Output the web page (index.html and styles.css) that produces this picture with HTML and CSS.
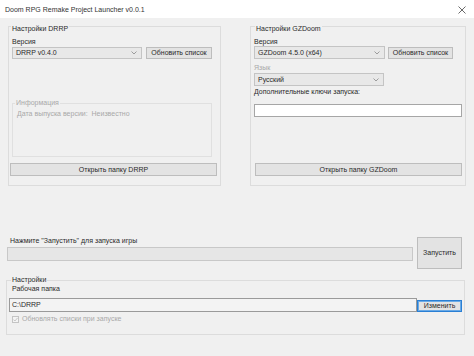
FILE: index.html
```html
<!DOCTYPE html>
<html lang="ru">
<head>
    <meta charset="UTF-8">
    <meta name="viewport" content="width=device-width, initial-scale=1.0">
    <title>Doom RPG Remake Project Launcher v0.0.1</title>
    <link rel="stylesheet" href="styles.css">
</head>
<body>
    <div class="window">
        <div class="titlebar">
            <span class="title">Doom RPG Remake Project Launcher v0.0.1</span>
            <svg class="close" width="8" height="8" viewBox="0 0 8 8">
                <path d="M0.5 0.5 L7.5 7.5 M7.5 0.5 L0.5 7.5" stroke="#444" stroke-width="0.8" fill="none"/>
            </svg>
        </div>
        <div class="client">
            <div class="top-row">
                <div class="group group-drrp">
                    <div class="legend">Настройки DRRP</div>
                    <div class="label lbl-version">Версия</div>
                    <div class="row">
                        <div class="combo combo-drrp">DRRP v0.4.0<svg class="arrow" width="6" height="4" viewBox="0 0 6 4"><path d="M0.5 0.5 L3 3 L5.5 0.5" stroke="#888" stroke-width="0.8" fill="none"/></svg></div>
                        <div class="btn btn-refresh">Обновить список</div>
                    </div>
                    <div class="group info">
                        <div class="legend legend-info disabled">Информация</div>
                        <div class="label info-text disabled">Дата выпуска версии:&nbsp;&nbsp;Неизвестно</div>
                    </div>
                    <div class="btn btn-open-drrp">Открыть папку DRRP</div>
                </div>
                <div class="group group-gz">
                    <div class="legend">Настройки GZDoom</div>
                    <div class="label lbl-gz">Версия</div>
                    <div class="row row-gz">
                        <div class="combo combo-gz">GZDoom 4.5.0 (x64)<svg class="arrow" width="6" height="4" viewBox="0 0 6 4"><path d="M0.5 0.5 L3 3 L5.5 0.5" stroke="#888" stroke-width="0.8" fill="none"/></svg></div>
                        <div class="btn btn-refresh-gz">Обновить список</div>
                    </div>
                    <div class="label lbl-lang disabled">Язык</div>
                    <div class="combo combo-lang">Русский<svg class="arrow" width="6" height="4" viewBox="0 0 6 4"><path d="M0.5 0.5 L3 3 L5.5 0.5" stroke="#888" stroke-width="0.8" fill="none"/></svg></div>
                    <div class="label lbl-keys">Дополнительные ключи запуска:</div>
                    <div class="textbox tb-keys"></div>
                    <div class="btn btn-open-gz">Открыть папку GZDoom</div>
                </div>
            </div>
            <div class="launch-row">
                <div class="launch-left">
                    <div class="label status">Нажмите "Запустить" для запуска игры</div>
                    <div class="progress"></div>
                </div>
                <div class="btn btn-launch">Запустить</div>
            </div>
            <div class="group group-settings">
                <div class="legend legend-settings">Настройки</div>
                <div class="label lbl-folder">Рабочая папка</div>
                <div class="row row-folder">
                    <div class="textbox tb-folder">C:\DRRP</div>
                    <div class="btn btn-change">Изменить</div>
                </div>
                <div class="check-row disabled">
                    <svg class="checkbox" width="7" height="7" viewBox="0 0 7 7">
                        <rect x="0.5" y="0.5" width="6" height="6" fill="#f4f4f4" stroke="#c4c4c4"/>
                        <path d="M1.5 3.6 L2.9 5 L5.6 1.9" stroke="#c0c0c0" stroke-width="0.9" fill="none"/>
                    </svg>
                    <span>Обновлять списки при запуске</span>
                </div>
            </div>
        </div>
    </div>
</body>
</html>
```

FILE: styles.css
```css
* {
    box-sizing: border-box;
}
body {
    margin: 0;
    font-family: 'Liberation Sans', Arial, sans-serif;
    font-size: 7px;
    line-height: 8px;
    color: #2a2a2a;
}
.window {
    width: 474px;
    height: 356px;
    display: flex;
    flex-direction: column;
    background: #f0f0f0;
}
.titlebar {
    height: 18px;
    background: #fff;
    display: flex;
    align-items: center;
    justify-content: space-between;
    padding: 2px 8px 0 5px;
    color: #333;
}
.title {
    font-size: 7px;
}
.client {
    flex: 1;
    display: flex;
    flex-direction: column;
}
.top-row {
    display: flex;
    gap: 29px;
    margin: 8px 0 0 8px;
}
.group {
    border: 1px solid #dcdcdc;
    display: flex;
    flex-direction: column;
    align-items: flex-start;
}
.legend {
    background: #f0f0f0;
    padding: 0 1px;
    margin-top: -2px;
    height: 8px;
}
.label {
    height: 8px;
    white-space: nowrap;
}
.disabled {
    color: #a8a8a8;
}
.row {
    display: flex;
    align-items: flex-end;
}
.combo {
    height: 12px;
    background: #e8e8e8;
    border: 1px solid #c4c4c4;
    padding: 0 4px 0 3px;
    display: flex;
    align-items: center;
    justify-content: space-between;
}
.btn {
    height: 12px;
    background: #e3e3e3;
    border: 1px solid #bdbdbd;
    display: flex;
    align-items: center;
    justify-content: center;
    white-space: nowrap;
}
.textbox {
    height: 13px;
    background: #fff;
    border: 1px solid #a6a6a6;
    padding: 0 2px;
    display: flex;
    align-items: center;
}

/* DRRP group */
.group-drrp {
    width: 213px;
    height: 160px;
}
.group-drrp .legend {
    margin-left: 2px;
}
.lbl-version {
    margin: 5px 0 0 3px;
}
.group-drrp .row {
    margin: 1px 0 0 3px;
    gap: 4px;
}
.combo-drrp {
    width: 130px;
}
.btn-refresh {
    width: 66px;
}
.info {
    width: 200px;
    height: 54px;
    margin: 44px 0 0 3px;
    border-color: #e0e0e0;
}
.legend-info {
    margin: -5px 0 0 5px;
}
.info-text {
    margin: 3px 0 0 4px;
}
.btn-open-drrp {
    width: 207px;
    height: 13px;
    margin: 6px 0 0 1px;
}

/* GZDoom group */
.group-gz {
    width: 216px;
    height: 160px;
}
.group-gz .legend {
    margin-left: 4px;
}
.lbl-gz {
    margin: 5px 0 0 3px;
}
.row-gz {
    margin-left: 3px;
    gap: 3px;
}
.combo-gz {
    width: 131px;
    height: 13px;
}
.btn-refresh-gz {
    width: 65px;
}
.lbl-lang {
    margin: 5px 0 0 3px;
}
.combo-lang {
    width: 130px;
    height: 13px;
    margin: 1px 0 0 3px;
}
.lbl-keys {
    margin: 2px 0 0 3px;
}
.tb-keys {
    width: 208px;
    margin: 8px 0 0 3px;
}
.btn-open-gz {
    width: 207px;
    height: 13px;
    margin: 46px 0 0 4px;
}

/* launch */
.launch-row {
    display: flex;
    gap: 4px;
    margin: 51px 0 0 7px;
}
.launch-left {
    display: flex;
    flex-direction: column;
    gap: 2px;
}
.status {
    padding-left: 3px;
}
.progress {
    width: 406px;
    height: 14px;
    background: #e6e6e6;
    border: 1px solid #c8c8c8;
}
.btn-launch {
    width: 45px;
    height: 32px;
}

/* settings */
.group-settings {
    width: 459px;
    height: 55px;
    margin: 11px 0 0 6px;
}
.legend-settings {
    margin: -5px 0 0 4px;
}
.lbl-folder {
    margin: 1px 0 0 5px;
}
.row-folder {
    margin: 5px 0 0 2px;
}
.tb-folder {
    width: 408px;
    height: 14px;
    background: #f3f3f3;
    border-color: #9a9a9a;
}
.btn-change {
    width: 45px;
    border: 1px solid #2a7fd4;
    box-shadow: inset 0 0 0 1px #6aaae6;
}
.check-row {
    display: flex;
    align-items: center;
    gap: 3px;
    margin: 3px 0 0 5px;
}
```
